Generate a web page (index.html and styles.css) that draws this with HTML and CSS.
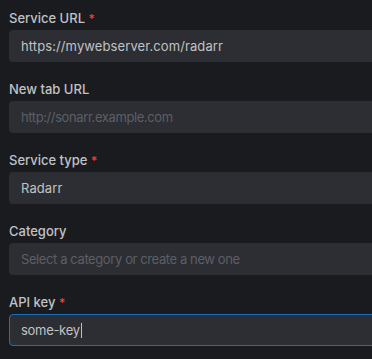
FILE: index.html
```html
<!DOCTYPE html>
<html lang="en">
<head>
    <meta charset="UTF-8">
    <meta name="viewport" content="width=device-width, initial-scale=1.0">
    <title>Service settings</title>
    <link rel="stylesheet" href="styles.css">
</head>
<body>
    <form class="service-form">
        <div class="field">
            <label class="field-label" for="service-url">Service URL <span class="required">*</span></label>
            <input class="field-input" type="text" id="service-url" value="https://mywebserver.com/radarr">
        </div>
        <div class="field">
            <label class="field-label" for="new-tab-url">New tab URL</label>
            <input class="field-input" type="text" id="new-tab-url" placeholder="http://sonarr.example.com">
        </div>
        <div class="field">
            <label class="field-label" for="service-type">Service type <span class="required">*</span></label>
            <input class="field-input" type="text" id="service-type" value="Radarr">
        </div>
        <div class="field">
            <label class="field-label" for="category">Category</label>
            <input class="field-input" type="text" id="category" placeholder="Select a category or create a new one">
        </div>
        <div class="field">
            <label class="field-label" for="api-key">API key <span class="required">*</span></label>
            <div class="field-input focused" id="api-key">some-key<span class="caret"></span></div>
        </div>
    </form>
</body>
</html>
```

FILE: styles.css
```css
/* Fondo oscuro general */
body {
    margin: 0;
    padding: 8px 0 0 9px;
    background: #1a1b1e;
    color: #c1c2c5;
    font-family: 'Inter', 'Roboto', sans-serif;
    overflow: hidden;
}

.service-form {
    display: flex;
    flex-direction: column;
    gap: 17px;
    width: 420px;
}

.field {
    display: flex;
    flex-direction: column;
}

.field-label {
    display: block;
    height: 20px;
    font-size: 13px;
    line-height: 20px;
    font-weight: 500;
    margin-bottom: 2px;
    color: #c1c2c5;
}

.required {
    color: #f03e3e;
    font-size: 12px;
    line-height: 1;
}

.field-input {
    box-sizing: border-box;
    height: 32px;
    padding: 0 11px;
    border: 1px solid transparent;
    border-radius: 4px;
    background: #2c2e33;
    color: #c1c2c5;
    font-family: inherit;
    font-size: 13px;
    letter-spacing: 0.1px;
    line-height: 30px;
    outline: none;
}

.field-input::placeholder {
    color: #5c5f66;
    letter-spacing: -0.4px;
}

.focused {
    border-color: #1971c2;
    display: flex;
    align-items: center;
    letter-spacing: -0.3px;
}

.caret {
    display: inline-block;
    width: 1px;
    height: 15px;
    margin-left: 1px;
    background: #c1c2c5;
}
```
